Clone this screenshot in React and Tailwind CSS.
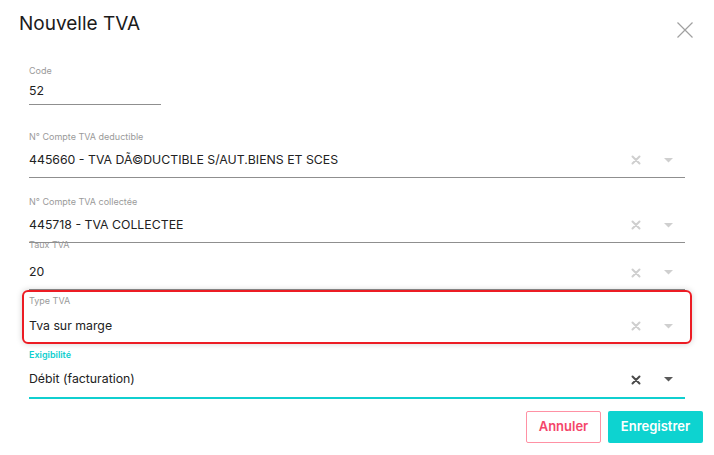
function ClearIcon({ dark }) {
  return (
    <svg width="10" height="10" viewBox="0 0 10 10" className={dark ? "text-[#4a4a4a]" : "text-[#cfcfcf]"}>
      <path d="M1.5 1.5 L8.5 8.5 M8.5 1.5 L1.5 8.5" stroke="currentColor" strokeWidth="2" strokeLinecap="round" />
    </svg>
  );
}

function Caret({ dark }) {
  return (
    <svg width="9" height="5" viewBox="0 0 9 5" className={dark ? "text-[#5a5a5a]" : "text-[#cfcfcf]"}>
      <path d="M0 0 H9 L4.5 4.5 Z" fill="currentColor" />
    </svg>
  );
}

function SelectField({ label, value, className = "", active, underline = true, rowClass = "h-[35px]" }) {
  return (
    <div className={className}>
      <div className={`h-[12px] text-[9px] leading-[12px] ${active ? "font-semibold text-[#10cfcf]" : "text-[#9a9a9a]"}`}>
        {label}
      </div>
      <div
        className={`flex items-center ${rowClass} ${underline ? (active ? "border-b-2 border-[#10cfcf]" : "border-b border-[#8f8f8f]") : ""}`}
      >
        <span className="flex-1 text-[12.3px] text-[#222]">{value}</span>
        <div className="flex w-[30px] justify-center">
          <ClearIcon dark={active} />
        </div>
        <div className="flex w-[34px] justify-center">
          <Caret dark={active} />
        </div>
      </div>
    </div>
  );
}

export default function App() {
  return (
    <div className="h-[455px] w-[714px] bg-white font-['Inter',sans-serif]">
      <div className="flex items-start justify-between pl-[19px] pr-[21px] pt-[11px]">
        <h1 className="text-[19px] leading-[26px] font-normal text-[#1b1b1b]">Nouvelle TVA</h1>
        <button className="mt-[11px] text-[#a0a0a0]">
          <svg width="16" height="16" viewBox="0 0 16 16">
            <path d="M0.5 0.5 L15.5 15.5 M15.5 0.5 L0.5 15.5" stroke="currentColor" strokeWidth="1.2" />
          </svg>
        </button>
      </div>

      <div className="px-[29px]">
        {/* Code */}
        <div className="mt-[27px] w-[132px]">
          <div className="h-[12px] text-[9px] leading-[12px] text-[#9a9a9a]">Code</div>
          <div className="flex h-[28px] items-center border-b border-[#8f8f8f] pt-[2px] text-[12.3px] text-[#222]">52</div>
        </div>

        <SelectField
          className="mt-[26px]"
          label="N° Compte TVA deductible"
          value="445660 - TVA DÃ©DUCTIBLE S/AUT.BIENS ET SCES"
        />
        <SelectField className="mt-[18px]" label="N° Compte TVA collectée" value="445718 - TVA COLLECTEE" />
        <SelectField className="-mt-[4px]" label="Taux TVA" value="20" rowClass="h-[39px] pt-[5px]" />

        <div className="-mx-[7px] rounded-[6px] border-2 border-[#ec1c24] px-[5px] pt-[3px] shadow-[0_0_6px_rgba(0,0,0,0.18)]">
          <SelectField label="Type TVA" value="Tva sur marge" underline={false} rowClass="h-[35px] pt-[3px]" />
        </div>

        <SelectField className="mt-[5px]" label="Exigibilité" value="Débit (facturation)" active rowClass="h-[38px] pt-[1px]" />

        <div className="mt-[12px] flex justify-end gap-[7px] -mr-[18px]">
          <button className="h-[32px] w-[75px] rounded-[2px] border border-[#ff91a4] text-[13px] font-semibold text-[#f4466b]">
            Annuler
          </button>
          <button className="h-[32px] w-[95px] rounded-[2px] bg-[#0dd3d0] text-[13px] font-semibold text-white">
            Enregistrer
          </button>
        </div>
      </div>
    </div>
  );
}
